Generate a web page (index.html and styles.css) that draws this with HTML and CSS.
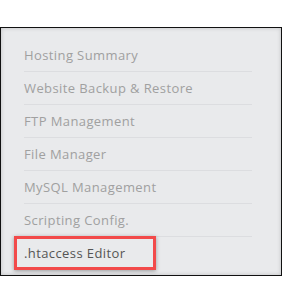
FILE: index.html
```html
<!DOCTYPE html>
<html lang="en">
<head>
    <meta charset="UTF-8">
    <title>Hosting Menu</title>
    <link rel="stylesheet" href="styles.css">
</head>
<body>

    <div class="panel">
        <ul class="menu">
            <li>Hosting Summary</li>
            <li>Website Backup &amp; Restore</li>
            <li>FTP Management</li>
            <li>File Manager</li>
            <li>MySQL Management</li>
            <li>Scripting Config.</li>
            <li class="last"><span class="highlight">.htaccess Editor</span></li>
        </ul>
    </div>

</body>
</html>
```

FILE: styles.css
```css
* {
    margin: 0;
    padding: 0;
    box-sizing: border-box;
}

body {
    font-family: 'Open Sans', sans-serif;
    background-color: #fff;
    width: 282px;
}

.panel {
    margin-top: 27px;
    width: 282px;
    background-color: #e9eaec;
    border: 1px solid #111;
    box-shadow: inset 0 0 4px rgba(0, 0, 0, 0.18), 0 2px 2px rgba(0, 0, 0, 0.08);
    padding: 11px 29px 5px 23px;
}

.menu {
    list-style: none;
}

.menu li {
    height: 33px;
    line-height: 32px;
    font-size: 13px;
    color: #a0a0a0;
    border-bottom: 1px solid #dcdde0;
    letter-spacing: 0.4px;
}

.menu li.last {
    border-bottom: none;
}

.highlight {
    display: inline-block;
    margin-left: -10px;
    margin-top: -1px;
    width: 142px;
    height: 34px;
    line-height: 28px;
    padding-left: 7px;
    border: 3px solid #f24a4a;
    color: #555;
    box-shadow: 0 1px 4px rgba(0, 0, 0, 0.35);
}
```
